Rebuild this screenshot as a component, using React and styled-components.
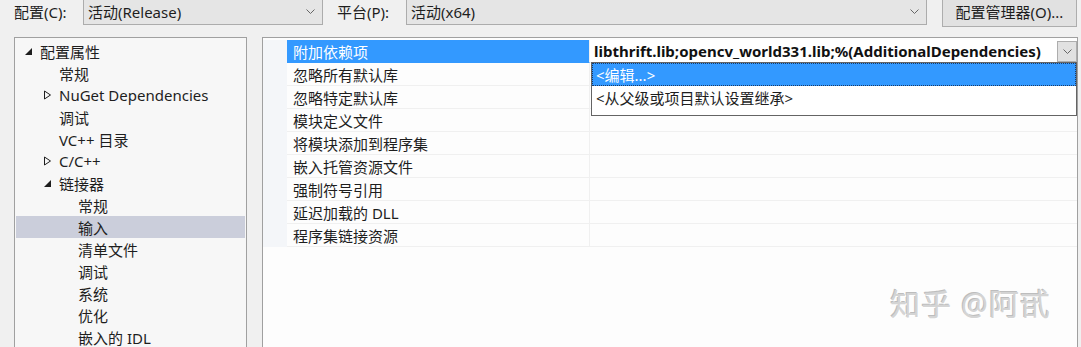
import React from "react";
import styled, { createGlobalStyle } from "styled-components";

const GlobalStyle = createGlobalStyle`
  body {
    margin: 0;
    background: #f0f0f0;
    font-family: "Noto Sans", "Noto Sans CJK SC", sans-serif;
    color: #1e1e1e;
  }
`;

const treeItems = [
  { text: "配置属性", level: 0, arrow: "open" },
  { text: "常规", level: 1 },
  { text: "NuGet Dependencies", level: 1, arrow: "closed" },
  { text: "调试", level: 1 },
  { text: "VC++ 目录", level: 1 },
  { text: "C/C++", level: 1, arrow: "closed" },
  { text: "链接器", level: 1, arrow: "open" },
  { text: "常规", level: 2 },
  { text: "输入", level: 2, selected: true },
  { text: "清单文件", level: 2 },
  { text: "调试", level: 2 },
  { text: "系统", level: 2 },
  { text: "优化", level: 2 },
  { text: "嵌入的 IDL", level: 2 },
];

const props = [
  "附加依赖项",
  "忽略所有默认库",
  "忽略特定默认库",
  "模块定义文件",
  "将模块添加到程序集",
  "嵌入托管资源文件",
  "强制符号引用",
  "延迟加载的 DLL",
  "程序集链接资源",
];

const Chevron = () => (
  <svg width="9" height="5" viewBox="0 0 9 5">
    <path d="M0.5 0.5 L4.5 4.5 L8.5 0.5" fill="none" stroke="#666" strokeWidth="1" />
  </svg>
);

const Arrow = ({ type }) =>
  type === "open" ? (
    <svg width="9" height="9" viewBox="0 0 9 9">
      <path d="M8 1 L8 8 L1 8 Z" fill="#1e1e1e" />
    </svg>
  ) : (
    <svg width="9" height="10" viewBox="0 0 9 10">
      <path d="M1.5 1 L7.5 5 L1.5 9 Z" fill="none" stroke="#1e1e1e" strokeWidth="1" />
    </svg>
  );

const App = () => {
  return (
    <>
      <GlobalStyle />
      <Page>
        <TopBar>
          <Label>配置(C):</Label>
          <Select width={240}>
            <span>活动(Release)</span>
            <Chevron />
          </Select>
          <Label gap={14}>平台(P):</Label>
          <Select width={521}>
            <span>活动(x64)</span>
            <Chevron />
          </Select>
          <Button>配置管理器(O)...</Button>
        </TopBar>
        <Body>
          <TreePanel>
            {treeItems.map((item, i) => (
              <TreeRow key={i} selected={item.selected}>
                <ArrowSlot level={item.level}>
                  {item.arrow && <Arrow type={item.arrow} />}
                </ArrowSlot>
                <span>{item.text}</span>
              </TreeRow>
            ))}
          </TreePanel>
          <GridPanel>
            {props.map((name, i) => (
              <GridRow key={i}>
                <Gutter />
                <NameCell active={i === 0}>{name}</NameCell>
                {i === 0 ? (
                  <ValueCombo>
                    <ValueText>libthrift.lib;opencv_world331.lib;%(AdditionalDependencies)</ValueText>
                    <DropButton>
                      <Chevron />
                    </DropButton>
                  </ValueCombo>
                ) : (
                  <ValueCell />
                )}
              </GridRow>
            ))}
            <DropList>
              <DropItem active>&lt;编辑...&gt;</DropItem>
              <DropItem>&lt;从父级或项目默认设置继承&gt;</DropItem>
            </DropList>
            <Watermark>知乎 @阿甙</Watermark>
          </GridPanel>
        </Body>
      </Page>
    </>
  );
};

export default App;

const Page = styled.div`
  width: 1081px;
  height: 347px;
  overflow: hidden;
  display: flex;
  flex-direction: column;
`;

const TopBar = styled.div`
  display: flex;
  align-items: center;
  height: 26px;
  margin-top: -1px;
  padding-left: 14px;
  font-size: 15px;
`;

const Label = styled.div`
  width: 69px;
  margin-left: ${(p) => p.gap || 0}px;
  padding-bottom: 2px;
`;

const Select = styled.div`
  width: ${(p) => p.width}px;
  height: 26px;
  box-sizing: border-box;
  background: #e5e5e5;
  border: 1px solid #acacac;
  display: flex;
  align-items: center;
  justify-content: space-between;
  padding: 0 7px 2px 4px;
`;

const Button = styled.div`
  margin-left: 15px;
  width: 135px;
  height: 28px;
  margin-top: 1px;
  box-sizing: border-box;
  background: #e1e1e1;
  border: 1px solid #adadad;
  display: flex;
  align-items: center;
  justify-content: center;
  padding-bottom: 2px;
`;

const Body = styled.div`
  flex: 1;
  display: flex;
  gap: 15px;
  margin-top: 12px;
  padding-left: 14px;
  min-height: 0;
`;

const TreePanel = styled.div`
  width: 233px;
  box-sizing: border-box;
  height: 320px;
  background: #f7f7f7;
  border: 1px solid #a0a0a0;
  padding: 2px 1px 0;
  font-size: 15px;
`;

const TreeRow = styled.div`
  height: 22px;
  display: flex;
  align-items: center;
  background: ${(p) => (p.selected ? "#cbcedb" : "transparent")};
`;

const ArrowSlot = styled.div`
  width: 13px;
  margin-left: ${(p) => 8 + p.level * 19}px;
  margin-right: 3px;
  display: flex;
  align-items: center;
`;

const GridPanel = styled.div`
  position: relative;
  flex: 1;
  margin-right: 3px;
  height: 320px;
  box-sizing: border-box;
  background: #fdfdfd;
  border: 1px solid #a0a0a0;
  padding-top: 2px;
  font-size: 15px;
`;

const GridRow = styled.div`
  display: flex;
  height: 23px;
`;

const Gutter = styled.div`
  width: 24px;
  background: #f4f6f9;
`;

const NameCell = styled.div`
  width: 303px;
  box-sizing: border-box;
  padding-left: 6px;
  display: flex;
  align-items: center;
  border-right: 1px solid #f0f0f0;
  border-bottom: 1px solid ${(p) => (p.active ? "#3399ff" : "#f0f0f0")};
  background: ${(p) => (p.active ? "#3399ff" : "transparent")};
  color: ${(p) => (p.active ? "#fff" : "#1e1e1e")};
`;

const ValueCell = styled.div`
  flex: 1;
  border-bottom: 1px solid #f0f0f0;
`;

const ValueCombo = styled.div`
  flex: 1;
  display: flex;
  align-items: center;
  background: #fff;
  border-bottom: 1px solid #f0f0f0;
`;

const ValueText = styled.div`
  flex: 1;
  padding-left: 4px;
  font-weight: 700;
  font-size: 15px;
  color: #111;
  white-space: nowrap;
  overflow: hidden;
`;

const DropButton = styled.div`
  width: 20px;
  height: 21px;
  box-sizing: border-box;
  background: #e1e1e1;
  border: 1px solid #adadad;
  display: flex;
  align-items: center;
  justify-content: center;
`;

const DropList = styled.div`
  position: absolute;
  left: 328px;
  right: 0;
  top: 24px;
  height: 54px;
  box-sizing: border-box;
  background: #fff;
  border: 1px solid #646464;
  font-size: 15px;
`;

const DropItem = styled.div`
  height: 23px;
  box-sizing: border-box;
  display: flex;
  align-items: center;
  padding-left: 3px;
  background: ${(p) => (p.active ? "#3399ff" : "transparent")};
  color: ${(p) => (p.active ? "#fff" : "#1e1e1e")};
  border: 1px dotted ${(p) => (p.active ? "#1a3a66" : "transparent")};
`;

const Watermark = styled.div`
  position: absolute;
  right: 26px;
  top: 242px;
  font-size: 30px;
  color: #d4d4d4;
  letter-spacing: 1px;
  text-shadow: 1px 1px 0 #ffffff, -1px -1px 0 #bdbdbd;
`;
